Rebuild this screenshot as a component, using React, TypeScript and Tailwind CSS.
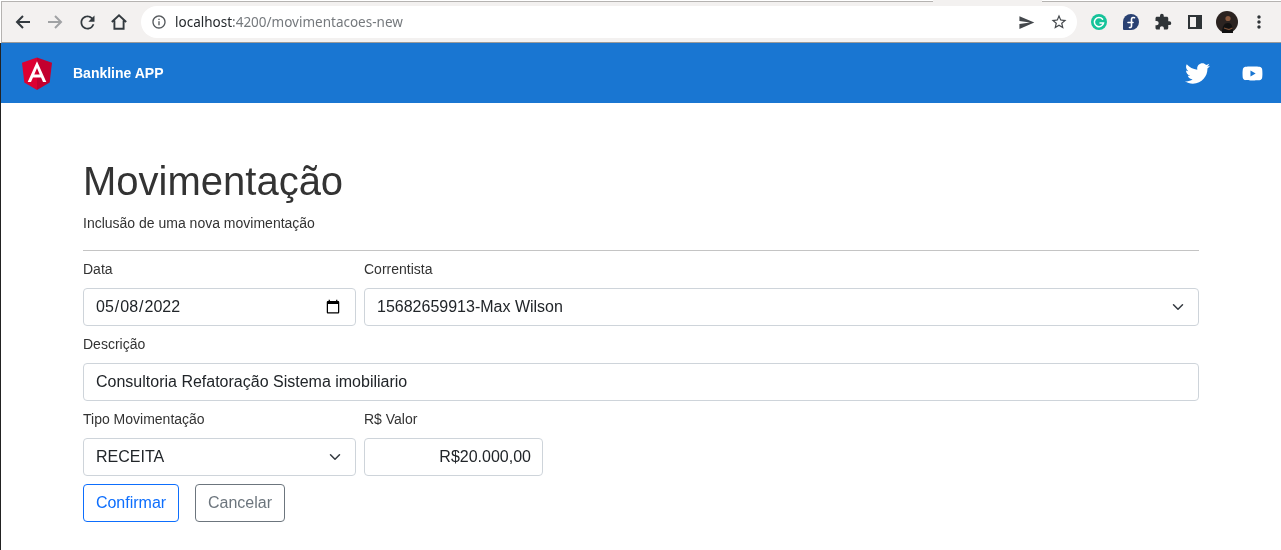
import { MdRefresh, MdInfoOutline, MdSend, MdStarBorder, MdExtension, MdMoreVert } from "react-icons/md";
import { FaTwitter, FaYoutube } from "react-icons/fa";

function Angular() {
  return (
    <svg width="32" height="34" viewBox="0 0 32 34" className="mt-[1px] block">
      <path d="M16 0.5 L1 5.800 L3.300 25.600 L16 33 Z" fill="#dd0031" />
      <path d="M16 0.5 L31 5.800 L28.700 25.600 L16 33 Z" fill="#c3002f" />
      <path d="M16 4.200 L6.700 25 H10 L12 20.400 H20 L22 25 H25.300 Z M18.700 17.600 H13.300 L16 11 Z" fill="#fff" />
    </svg>
  );
}

function Chevron() {
  return (
    <svg width="12" height="12" viewBox="0 0 16 16" className="pointer-events-none absolute right-[15px] top-[13px]">
      <path d="M2 5l6 6 6-6" fill="none" stroke="#343a40" strokeWidth="2" strokeLinecap="round" strokeLinejoin="round" />
    </svg>
  );
}

const field = "block h-[38px] w-full rounded-[4px] border border-[#ced4da] bg-transparent px-3 text-base text-[#212529] outline-none";
const label = "block h-[30px] pt-[1px] text-sm leading-[21px] text-[#333]";

export default function App() {
  return (
    <div className="flex min-h-[550px] flex-col bg-white font-['Liberation_Sans',sans-serif]">
      <div className="relative h-[43px] bg-white pl-[1px] pt-[1px]">
        <div className="flex h-full items-center border-b border-l border-t border-b-[#9a9a9a] border-l-[#b5b3b1] border-t-[#b5b3b1] bg-[#f3f1f0] pl-[13px]">
          <div className="flex items-center text-[#333a3f]">
            <svg width="16" height="16" viewBox="0 0 16 16" className="block">
              <path d="M15 8H2M8 2 2 8l6 6" fill="none" stroke="currentColor" strokeWidth="2" />
            </svg>
            <svg width="16" height="16" viewBox="0 0 16 16" className="ml-4 block text-[#a0a2a4]">
              <path d="M1 8h13M8 2l6 6-6 6" fill="none" stroke="currentColor" strokeWidth="2" />
            </svg>
            <MdRefresh size={21} className="ml-[14px]" />
            <svg width="16" height="16" viewBox="0 0 16 16" className="ml-[13px] block">
              <path d="M.8 8 8 1.400 15.200 8M3.400 6.400V14.800H12.600V6.400" fill="none" stroke="currentColor" strokeWidth="1.900" />
            </svg>
          </div>
          <div className="ml-[14px] flex h-8 w-[936px] items-center rounded-full bg-white pl-[10px] pr-[9px]">
            <MdInfoOutline size={16} className="text-[#55595d]" />
            <span className="ml-[8px] font-['Noto_Sans',sans-serif] text-[13.5px] text-[#24282c] will-change-transform">
              localhost<span className="text-[#75797d]">:4200/movimentacoes-new</span>
            </span>
            <MdSend size={17} className="ml-auto text-[#44484c]" />
            <MdStarBorder size={18} className="ml-[15px] text-[#44484c]" />
          </div>
          <div className="ml-[13px] flex items-center text-[#2f3437]">
            <svg width="18" height="18" viewBox="0 0 18 18" className="block">
              <circle cx="9" cy="9" r="8" fill="#15c39a" />
              <path d="M12.600 6.200A4.600 4.600 0 1 0 13.500 10H10" fill="none" stroke="#fff" strokeWidth="1.500" strokeLinecap="round" />
            </svg>
            <svg width="18" height="18" viewBox="0 0 18 18" className="ml-[14px] block">
              <path d="M9 1a8 8 0 0 1 0 16H2a1 1 0 0 1-1-1V9a8 8 0 0 1 8-8Z" fill="#294172" />
              <path d="M6 9.500h5M7.500 14.500c1.400 .3 2-.5 2-1.800V6.300c0-1.400 1-2.200 3-1.600" fill="none" stroke="#fff" strokeWidth="1.600" strokeLinecap="round" />
            </svg>
            <MdExtension size={18} className="ml-[14px]" />
            <svg width="14" height="14" viewBox="0 0 14 14" className="ml-[16px] block">
              <path d="M0 0h14v14H0Z M2 2v10h6V2Z" fill="#2f3437" fillRule="evenodd" />
            </svg>
            <svg width="22" height="22" viewBox="0 0 22 22" className="ml-[14px] block">
              <circle cx="11" cy="11" r="11" fill="#2b2320" />
              <circle cx="12" cy="7.500" r="2.600" fill="#8a5a3e" />
              <path d="M6 22c0-7 2.500-10 6-10s5 3 5 10Z" fill="#111" />
              <path d="M8 17l5 1.500 3.500-1.500" fill="none" stroke="#7a4f36" strokeWidth="1.200" />
            </svg>
            <MdMoreVert size={20} className="ml-[11px]" />
          </div>
        </div>
        <div className="absolute left-[933px] top-0 h-[2px] w-[109px] bg-[#f3f1f0]" />
      </div>

      <div className="flex-1 border-l border-l-[#222]">
        <nav className="flex h-[60px] items-center bg-[#1976d2] pl-[20px] pr-[18px] text-white">
          <Angular />
          <span className="ml-5 text-sm font-bold will-change-transform">Bankline APP</span>
          <FaTwitter size={25} className="ml-auto" />
          <FaYoutube size={21} className="ml-[32px]" />
        </nav>

        <main className="pl-[82px] pr-[82px] pt-[54px] will-change-transform">
          <h1 className="text-[40px] leading-[48px] text-[#333]">Movimentação</h1>
          <p className="mt-[8px] text-sm leading-[21px] text-[#333]">Inclusão de uma nova movimentação</p>
          <hr className="mt-[16px] border-0 border-t border-t-[#c4c4c4]" />

          <form className="mt-[7px] flex flex-col gap-[7px]">
            <div className="flex gap-2">
              <div className="w-[273px]">
                <label className={label}>Data</label>
                <input type="date" defaultValue="2022-05-08" className={field + " pl-[11px]"} />
              </div>
              <div className="flex-1">
                <label className={label}>Correntista</label>
                <div className="relative">
                  <select className={field + " appearance-none"} defaultValue="a">
                    <option value="a">15682659913-Max Wilson</option>
                  </select>
                  <Chevron />
                </div>
              </div>
            </div>
            <div>
              <label className={label}>Descrição</label>
              <input type="text" defaultValue="Consultoria Refatoração Sistema imobiliario" className={field} />
            </div>
            <div className="flex gap-2">
              <div className="w-[273px]">
                <label className={label}>Tipo Movimentação</label>
                <div className="relative">
                  <select className={field + " appearance-none"} defaultValue="r">
                    <option value="r">RECEITA</option>
                  </select>
                  <Chevron />
                </div>
              </div>
              <div className="w-[179px]">
                <label className={label}>R$ Valor</label>
                <input type="text" defaultValue="R$20.000,00" className="block h-[38px] w-full rounded-[4px] border border-[#ced4da] bg-transparent pl-3 pr-[11px] text-right text-base text-[#212529] outline-none" />
              </div>
            </div>
          </form>

          <div className="mt-2 flex gap-4">
            <button className="h-[38px] w-[96px] rounded-[4px] border border-[#0d6efd] text-base text-[#0d6efd]">Confirmar</button>
            <button className="h-[38px] w-[90px] rounded-[4px] border border-[#6c757d] text-base text-[#6c757d]">Cancelar</button>
          </div>
        </main>
      </div>
    </div>
  );
}
